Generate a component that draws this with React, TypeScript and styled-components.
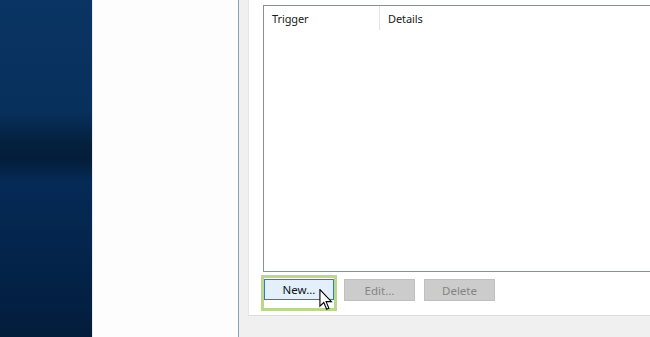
import styled, { createGlobalStyle } from "styled-components"

const Global = createGlobalStyle`
  html, body {
    margin: 0;
    padding: 0;
    overflow: hidden;
  }
  body {
    font-family: "Noto Sans", "Open Sans", sans-serif;
    font-size: 12px;
  }
`

const Screen = styled.div`
  display: flex;
  width: 650px;
  height: 337px;
  overflow: hidden;
`

const Desktop = styled.div`
  width: 92px;
  flex-shrink: 0;
  background: linear-gradient(
    180deg,
    #0a3463 0%,
    #08305d 33%,
    #04213f 42%,
    #041d3a 47%,
    #052a55 54%,
    #04254d 72%,
    #031d3c 100%
  );
`

const BackWindow = styled.div`
  width: 145px;
  flex-shrink: 0;
  background: #fdfdfd;
  border-left: 1px solid #e8ecf0;
`

const Frame = styled.div`
  flex: 1;
  display: flex;
  flex-direction: column;
  background: #f0f0f0;
  border-left: 1px solid #7ea1c6;
  padding-left: 9px;
`

const Panel = styled.div`
  height: 316px;
  background: #ffffff;
  border-left: 1px solid #e6e6e6;
  border-bottom: 1px solid #dcdcdc;
  box-sizing: border-box;
  padding: 5px 0 0 14px;
  display: flex;
  flex-direction: column;
`

const ListView = styled.div`
  height: 267px;
  box-sizing: border-box;
  border: 1px solid #8a8e96;
  border-right: none;
`

const Header = styled.div`
  display: flex;
  height: 24px;
`

const Column = styled.div<{ $width?: number }>`
  width: ${({ $width }) => ($width ? `${$width}px` : "auto")};
  flex: ${({ $width }) => ($width ? "none" : "1")};
  box-sizing: border-box;
  padding: 0 8px;
  display: flex;
  align-items: center;
  font-size: 11px;
  letter-spacing: -0.1px;
  color: #1a1a1a;
  border-right: ${({ $width }) => ($width ? "1px solid #e5e5e5" : "none")};
`

const Buttons = styled.div`
  display: flex;
  align-items: flex-start;
  gap: 9px;
  margin-top: 3px;
  margin-left: -2px;
`

const Highlight = styled.div`
  position: relative;
  border: 3px solid #b9d78e;
  padding: 1px 0 0 0;
  margin-right: -2px;
  height: 36px;
  box-sizing: border-box;
  display: flex;
  align-items: flex-start;
`

const Button = styled.button<{ $focused?: boolean }>`
  width: ${({ $focused }) => ($focused ? "70px" : "71px")};
  height: ${({ $focused }) => ($focused ? "21px" : "22px")};
  margin: ${({ $focused }) => ($focused ? "0" : "4px 0 0 0")};
  padding: 0;
  box-sizing: border-box;
  font-family: "Noto Sans", "Open Sans", sans-serif;
  font-size: 11.5px;
  color: ${({ $focused }) => ($focused ? "#111" : "#858585")};
  background: ${({ $focused }) => ($focused ? "#e3f0fb" : "#cccccc")};
  border: 1px solid ${({ $focused }) => ($focused ? "#2d7cbf" : "#bfbfbf")};
  display: flex;
  align-items: center;
  justify-content: center;
`

const Cursor = styled.svg`
  position: absolute;
  left: 55px;
  top: 11px;
  width: 14px;
  height: 21px;
`

const Footer = styled.div`
  flex: 1;
  background: #f0f0f0;
`

export default function App() {
  return (
    <Screen>
      <Global />
      <Desktop />
      <BackWindow />
      <Frame>
        <Panel>
          <ListView>
            <Header>
              <Column $width={116}>Trigger</Column>
              <Column>Details</Column>
            </Header>
          </ListView>
          <Buttons>
            <Highlight>
              <Button $focused>New...</Button>
              <Cursor viewBox="0 0 12 19">
                <path
                  d="M0.5 0.5 L0.5 15.5 L4 12.2 L6.6 18.3 L8.6 17.4 L6.1 11.4 L10.9 11.4 Z"
                  fill="#ffffff"
                  stroke="#000000"
                  strokeWidth="1"
                  strokeLinejoin="miter"
                />
              </Cursor>
            </Highlight>
            <Button>Edit...</Button>
            <Button>Delete</Button>
          </Buttons>
        </Panel>
        <Footer />
      </Frame>
    </Screen>
  )
}
